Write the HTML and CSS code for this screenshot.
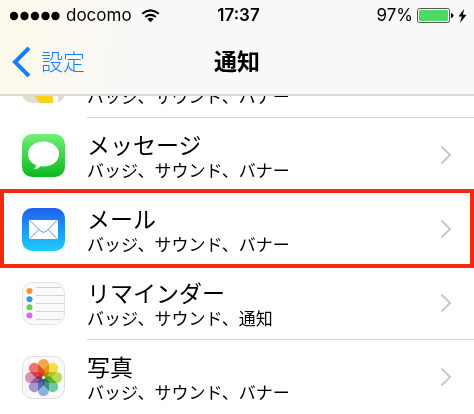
FILE: index.html
```html
<!DOCTYPE html>
<html lang="ja">
<head>
    <meta charset="UTF-8">
    <meta name="viewport" content="width=device-width, initial-scale=1.0">
    <title>通知</title>
    <link rel="stylesheet" href="styles.css">
</head>
<body>

<header class="header">
    <div class="status">
        <div class="carrier">
            <svg class="dots" width="50" height="10" viewBox="0 0 50 10">
                <circle cx="4" cy="5" r="4.2"/><circle cx="14.5" cy="5" r="4.2"/><circle cx="25" cy="5" r="4.2"/><circle cx="35.5" cy="5" r="4.2"/><circle cx="45.5" cy="5" r="4.2"/>
            </svg>
            <span>docomo</span>
            <svg class="wifi" width="19" height="14" viewBox="0 0 19 14">
                <path d="M1.2 4.8Q9.5-2 17.8 4.8M4.2 8Q9.5 3.8 14.8 8" fill="none" stroke="#000" stroke-width="2.1"/>
                <path d="M6.3 9.9Q9.5 7.6 12.7 9.9L9.5 13.2Z"/>
            </svg>
        </div>
        <span class="time">17:37</span>
        <div class="power">
            <span>97%</span>
            <svg width="37" height="15" viewBox="0 0 37 15">
                <rect x="0.5" y="0.5" width="32" height="14" rx="2" fill="#fff" stroke="#555"/>
                <rect x="2" y="2" width="29" height="11" rx="1" fill="#4cd964"/>
                <path d="M34 5Q36.5 5.500 36.500 7.500T34 10Z"/>
            </svg>
            <svg width="9" height="14" viewBox="0 0 9 14">
                <path d="M6 0L0.500 7.500H3.800L2 14L8.500 5.800H5Z"/>
            </svg>
        </div>
    </div>
    <nav class="nav">
        <a class="back" href="#">
            <svg width="20" height="32" viewBox="0 0 20 32"><path d="M17 2L3 16L17 30" fill="none" stroke="#147efb" stroke-width="4"/></svg>
            <span>設定</span>
        </a>
        <h1>通知</h1>
    </nav>
</header>

<main class="list">
    <a class="row row-cut" href="#">
        <svg class="icon" viewBox="0 0 43 43">
            <defs><clipPath id="cut"><rect width="43" height="43" rx="10"/></clipPath></defs>
            <g clip-path="url(#cut)">
                <rect width="43" height="43" fill="#e3ddd0"/>
                <path d="M8 30L18 43H31V30Z" fill="#fbd21b"/>
                <path d="M31 30H36V43H31Z" fill="#fff"/>
            </g>
        </svg>
        <div class="text"><span class="detail">バッジ、サウンド、バナー</span></div>
    </a>

    <a class="row" href="#">
        <svg class="icon" viewBox="0 0 43 43">
            <defs><linearGradient id="green" x2="0" y2="1"><stop stop-color="#72f077"/><stop offset="1" stop-color="#0bb920"/></linearGradient></defs>
            <rect width="43" height="43" rx="10" fill="url(#green)"/>
            <path d="M21.500 7.500C12.500 7.500 6 13 6 20C6 25 9 29 14 31C13.800 33 13 34.500 11.500 35.500C15 35.300 17 34 18.500 32.300C29 33.500 37 28 37 20C37 13 30.500 7.500 21.500 7.500Z" fill="#fff"/>
        </svg>
        <div class="text">
            <span class="name">メッセージ</span>
            <span class="detail">バッジ、サウンド、バナー</span>
        </div>
        <svg class="chevron" viewBox="0 0 12 20"><path d="M1.500 1.500L10 10L1.500 18.500"/></svg>
    </a>

    <a class="row row-marked" href="#">
        <svg class="icon" viewBox="0 0 43 43">
            <defs><linearGradient id="blue" x2="0" y2="1"><stop stop-color="#2060ee"/><stop offset="1" stop-color="#1ccdfb"/></linearGradient></defs>
            <rect width="43" height="43" rx="10" fill="url(#blue)"/>
            <rect x="7" y="12" width="29" height="19" rx="1" fill="#fff"/>
            <path d="M8 12.500L18.500 23Q21.500 26 24.500 23L35 12.500M8 30.500L17 21.500M35 30.500L26 21.500" fill="none" stroke="#4b9ce0"/>
        </svg>
        <div class="text">
            <span class="name">メール</span>
            <span class="detail">バッジ、サウンド、バナー</span>
        </div>
        <svg class="chevron" viewBox="0 0 12 20"><path d="M1.500 1.500L10 10L1.500 18.500"/></svg>
    </a>

    <a class="row" href="#">
        <svg class="icon" viewBox="0 0 43 43">
            <rect x="0.5" y="0.5" width="42" height="42" rx="10" fill="#fafafa" stroke="#e2e2e2"/>
            <path d="M14 5.500H39M14 13.500H42M14 21.500H42M14 29.500H42M14 37.500H39" stroke="#d2d2d2"/>
            <circle cx="7.500" cy="9" r="3" fill="#f79433"/>
            <circle cx="7.500" cy="17.300" r="3" fill="#2b9fe0"/>
            <circle cx="7.500" cy="25.300" r="3" fill="#63d04e"/>
            <circle cx="7.500" cy="33.500" r="3" fill="#cb74dc"/>
        </svg>
        <div class="text">
            <span class="name">リマインダー</span>
            <span class="detail">バッジ、サウンド、通知</span>
        </div>
        <svg class="chevron" viewBox="0 0 12 20"><path d="M1.500 1.500L10 10L1.500 18.500"/></svg>
    </a>

    <a class="row" href="#">
        <svg class="icon" viewBox="0 0 43 43">
            <rect x="0.5" y="0.5" width="42" height="42" rx="10" fill="#f8f8f8" stroke="#dedede"/>
            <g class="petals" transform="translate(21.500 21.500)">
                <rect x="-5.500" y="-18.500" width="11" height="18" rx="5.500" fill="#fbaa4c"/>
                <rect x="-5.500" y="-18.500" width="11" height="18" rx="5.500" fill="#f4e84c" transform="rotate(45)"/>
                <rect x="-5.500" y="-18.500" width="11" height="18" rx="5.500" fill="#bfdf5c" transform="rotate(90)"/>
                <rect x="-5.500" y="-18.500" width="11" height="18" rx="5.500" fill="#74cda8" transform="rotate(135)"/>
                <rect x="-5.500" y="-18.500" width="11" height="18" rx="5.500" fill="#8bb9e6" transform="rotate(180)"/>
                <rect x="-5.500" y="-18.500" width="11" height="18" rx="5.500" fill="#ae9ad2" transform="rotate(225)"/>
                <rect x="-5.500" y="-18.500" width="11" height="18" rx="5.500" fill="#e095c0" transform="rotate(270)"/>
                <rect x="-5.500" y="-18.500" width="11" height="18" rx="5.500" fill="#f37570" transform="rotate(315)"/>
            </g>
            <circle cx="21.500" cy="21.500" r="1.500" fill="#fff"/>
        </svg>
        <div class="text">
            <span class="name">写真</span>
            <span class="detail">バッジ、サウンド、バナー</span>
        </div>
        <svg class="chevron" viewBox="0 0 12 20"><path d="M1.500 1.500L10 10L1.500 18.500"/></svg>
    </a>
</main>

</body>
</html>
```
FILE: styles.css
```css
* {
    box-sizing: border-box;
}
body {
    margin: 0;
    background-color: white;
    color: #000;
    font-family: Inter, "Noto Sans CJK JP", sans-serif;
}
a {
    color: inherit;
    text-decoration: none;
}
svg {
    display: block;
    flex-shrink: 0;
}
.header {
    padding-top: 4px;
    background: linear-gradient(100deg, #fdf9ea, #f8f8f9 35%);
    border-bottom: 2px solid #d8d8da;
}
.status {
    display: grid;
    grid-template-columns: 1fr auto 1fr;
    align-items: center;
    height: 23px;
    padding: 0 7px 0 10px;
    font-size: 17px;
    line-height: 23px;
}
.carrier {
    display: flex;
    align-items: center;
    gap: 6px;
}
.wifi {
    margin-left: 3px;
}
.time {
    font-weight: 600;
}
.power {
    display: flex;
    align-items: center;
    justify-content: flex-end;
    gap: 4px;
}
.nav {
    display: grid;
    grid-template-columns: 1fr auto 1fr;
    align-items: center;
    height: 67px;
    padding: 2px 12px 0;
}
.nav h1 {
    margin: 0;
    font-size: 23px;
    font-weight: 700;
    line-height: 32px;
}
.back {
    display: flex;
    align-items: center;
    gap: 9px;
    color: #147efb;
    font-size: 22px;
    font-weight: 300;
    line-height: 32px;
}
.row {
    position: relative;
    display: flex;
    align-items: center;
    gap: 22px;
    height: 74px;
    padding: 0 22px;
}
.icon {
    width: 43px;
    height: 43px;
}
.text {
    flex: 1;
    display: flex;
    flex-direction: column;
    padding-top: 3px;
}
.name {
    font-size: 23px;
    line-height: 28px;
}
.detail {
    font-size: 17px;
    line-height: 22px;
}
.chevron {
    width: 12px;
    height: 20px;
    fill: none;
    stroke: #c7c7cc;
    stroke-width: 2;
}
/* separator starts at the text column */
.row::after {
    content: "";
    position: absolute;
    left: 87px;
    right: 0;
    bottom: 0;
    border-bottom: 1px solid #d5d5d8;
}
.row:last-child::after {
    display: none;
}
/* first row is scrolled half under the header */
.row-cut {
    align-items: flex-end;
    height: 22px;
    padding-bottom: 10px;
    overflow: hidden;
}
.row-cut .icon {
    margin-bottom: 5px;
}
.row-marked::after {
    left: 0;
    top: -3px;
    bottom: -2px;
    border: 4px solid #f42a0c;
    z-index: 1;
}
.petals rect {
    mix-blend-mode: multiply;
}
```
